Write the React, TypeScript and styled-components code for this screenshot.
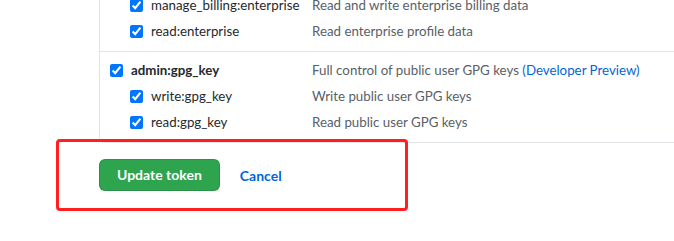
import styled, { createGlobalStyle } from "styled-components";

const GlobalStyle = createGlobalStyle`
    html, body {
        margin: 0;
        padding: 0;
        background: #fff;
        overflow: hidden;
    }

    body {
        font-family: Lato, "Noto Sans", "Liberation Sans", sans-serif;
        font-size: 14px;
        color: #24292e;
    }
`;

interface IndentProps {
    $child?: boolean;
}

const Page = styled.div`
    position: relative;
    display: flow-root;
    padding-left: 99px;
    min-height: 241px;
`;

const ScopeBox = styled.div`
    margin-top: -14px;
    width: 720px;
    border: 1px solid #e1e4e8;
    border-radius: 6px;
    font-size: 13.3px;
`;

const ScopeGroup = styled.div`
    padding: 5px 0 7px;

    & + & {
        border-top: 1px solid #e1e4e8;
    }
`;

const ScopeRow = styled.label<IndentProps>`
    display: grid;
    grid-template-columns: ${(props) => (props.$child ? "182px" : "202px")} 1fr;
    align-items: center;
    height: 26px;
    padding-left: ${(props) => (props.$child ? "30px" : "10px")};
`;

const ScopeName = styled.span<IndentProps>`
    display: flex;
    align-items: center;
    gap: 8px;
    font-weight: ${(props) => (props.$child ? 400 : 700)};
    white-space: nowrap;
`;

const Check = styled.input`
    width: 13px;
    height: 13px;
    margin: 0;
    accent-color: #0075ff;
`;

const ScopeDescription = styled.span`
    color: #586069;
    white-space: nowrap;
`;

const PreviewLink = styled.a`
    color: #0366d6;
    text-decoration: none;
`;

const Actions = styled.div`
    display: flex;
    align-items: center;
    gap: 20px;
    margin-top: 16px;
`;

const PrimaryButton = styled.button`
    height: 32px;
    padding: 5px 17px;
    font-family: inherit;
    font-size: 14px;
    font-weight: 700;
    line-height: 20px;
    color: #fff;
    background-color: #2ea44f;
    border: 1px solid rgba(27, 31, 35, 0.15);
    border-radius: 6px;
    cursor: pointer;
`;

const CancelLink = styled.a`
    font-size: 14px;
    font-weight: 700;
    color: #0366d6;
    text-decoration: none;
`;

const Highlight = styled.div`
    position: absolute;
    left: 56px;
    top: 139px;
    width: 346px;
    height: 66px;
    border: 3px solid #ff1f1f;
    border-radius: 4px;
    pointer-events: none;
`;

const groups = [
    {
        name: "admin:enterprise",
        scopes: [
            { name: "manage_billing:enterprise", description: "Read and write enterprise billing data" },
            { name: "read:enterprise", description: "Read enterprise profile data" },
        ],
    },
    {
        name: "admin:gpg_key",
        description: "Full control of public user GPG keys",
        preview: true,
        scopes: [
            { name: "write:gpg_key", description: "Write public user GPG keys" },
            { name: "read:gpg_key", description: "Read public user GPG keys" },
        ],
    },
];

export default function App() {
    return (
        <>
            <GlobalStyle />
            <Page>
                <ScopeBox>
                    {groups.map((group, index) => (
                        <ScopeGroup key={index}>
                            {group.description && (
                                <ScopeRow>
                                    <ScopeName>
                                        <Check type="checkbox" defaultChecked />
                                        {group.name}
                                    </ScopeName>
                                    <ScopeDescription>
                                        {group.description}
                                        {group.preview && (
                                            <> <PreviewLink href="#">(Developer Preview)</PreviewLink></>
                                        )}
                                    </ScopeDescription>
                                </ScopeRow>
                            )}
                            {group.scopes.map((scope) => (
                                <ScopeRow $child key={scope.name}>
                                    <ScopeName $child>
                                        <Check type="checkbox" defaultChecked />
                                        {scope.name}
                                    </ScopeName>
                                    <ScopeDescription>{scope.description}</ScopeDescription>
                                </ScopeRow>
                            ))}
                        </ScopeGroup>
                    ))}
                </ScopeBox>
                <Actions>
                    <PrimaryButton type="button">Update token</PrimaryButton>
                    <CancelLink href="#">Cancel</CancelLink>
                </Actions>
                <Highlight />
            </Page>
        </>
    );
}
